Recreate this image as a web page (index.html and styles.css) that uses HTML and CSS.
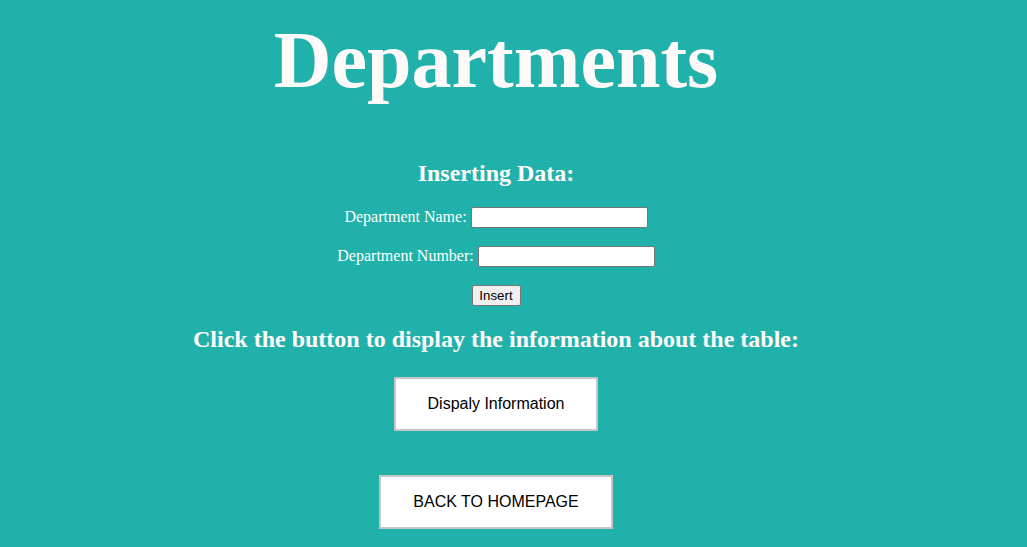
FILE: index.html
```html
<!DOCTYPE html>
<html lang="en">
<head>
<meta charset="utf-8">
<title>Departments</title>
<link rel="stylesheet" href="styles.css">
</head>
<body>
<div class="page">
  <h1 class="title">Departments</h1>
  <h2 class="subtitle">Inserting Data:</h2>
  <form class="form">
    <div class="row">
      <label class="label" for="dname">Department Name:</label>
      <input class="field" type="text" id="dname">
    </div>
    <div class="row">
      <label class="label" for="dnum">Department Number:</label>
      <input class="field" type="text" id="dnum">
    </div>
    <div class="row">
      <button class="insert" type="button">Insert</button>
    </div>
  </form>
  <h2 class="subtitle subtitle-click">Click the button to display the information about the table:</h2>
  <button class="big-btn display-btn" type="button">Dispaly Information</button>
  <button class="big-btn back-btn" type="button">BACK TO HOMEPAGE</button>
</div>
</body>
</html>
```

FILE: styles.css
```css
html, body {
  margin: 0;
  padding: 0;
  background: #20b2aa;
}

body {
  font-family: "Liberation Serif", "Times New Roman", serif;
  color: #fff;
  height: 547px;
  overflow: hidden;
}

.page {
  width: 976px;
  margin-left: 8px;
  padding-top: 14px;
  display: flex;
  flex-direction: column;
  align-items: center;
}

.title {
  margin: 0;
  font-size: 80px;
  line-height: 92px;
  font-weight: bold;
  color: #fffafa;
}

.subtitle {
  margin: 53px 0 0;
  font-size: 24px;
  line-height: 28px;
  font-weight: bold;
  color: #fffafa;
}

.subtitle-click {
  margin-top: 19px;
}

.form {
  margin-top: 20px;
  display: flex;
  flex-direction: column;
  align-items: center;
  gap: 18px;
}

.row {
  height: 21px;
  display: flex;
  justify-content: center;
  align-items: baseline;
  gap: 4px;
}

.label {
  font-size: 16px;
  line-height: 18px;
  color: #fff;
}

.field {
  box-sizing: border-box;
  width: 177px;
  height: 21px;
  margin: 0;
  padding: 1px 2px;
  border: 1px solid #767676;
  border-radius: 2px;
  background: #fff;
  font-family: "Liberation Sans", Arial, sans-serif;
  font-size: 13.33px;
}

.insert {
  box-sizing: border-box;
  width: 49px;
  height: 21px;
  margin: 0;
  padding: 0 6px;
  border: 1px solid #767676;
  border-radius: 2px;
  background: #efefef;
  color: #000;
  font-family: "Liberation Sans", Arial, sans-serif;
  font-size: 13.33px;
  line-height: 17px;
}

.big-btn {
  box-sizing: border-box;
  height: 54px;
  margin: 0;
  padding: 0;
  border: 2px solid #c6c6c6;
  background: #fff;
  color: #000;
  font-family: "Liberation Sans", Arial, sans-serif;
  font-size: 16px;
  line-height: 18px;
}

.display-btn {
  width: 204px;
  margin-top: 24px;
}

.back-btn {
  width: 234px;
  margin-top: 44px;
}
```
